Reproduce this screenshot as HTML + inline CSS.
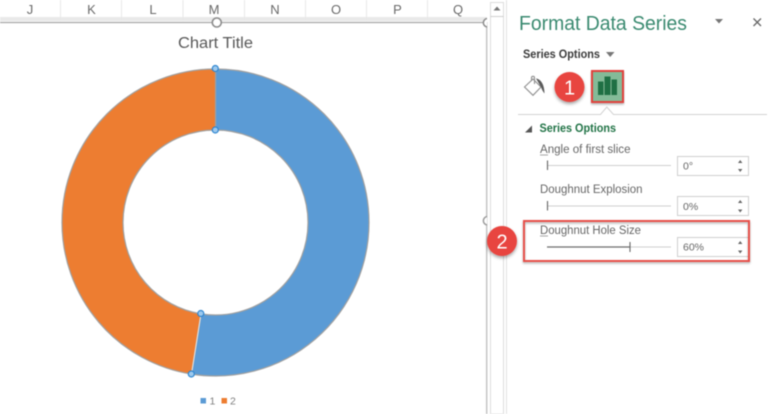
<!DOCTYPE html>
<html><head><meta charset="utf-8"><style>
html,body{margin:0;padding:0;background:#fff;width:768px;height:414px;overflow:hidden}
svg{display:block;filter:blur(.4px)}
text{font-family:"Liberation Sans",sans-serif}
</style></head><body>
<svg width="768" height="414" viewBox="0 0 768 414" xmlns="http://www.w3.org/2000/svg">
<defs>
<filter id="sh" x="-30%" y="-30%" width="160%" height="170%"><feDropShadow dx="0" dy="2" stdDeviation="1.5" flood-color="#000" flood-opacity=".35"/></filter>
<filter id="sh2" x="-5%" y="-10%" width="110%" height="125%"><feDropShadow dx="0" dy="1.5" stdDeviation="1" flood-color="#000" flood-opacity=".3"/></filter>
</defs>
<rect width="768" height="414" fill="#fff"/>
<!-- header -->
<rect x="0" y="17" width="487" height="4" fill="#e9e9e9"/>
<g stroke="#e8e8e8" stroke-width="1">
<path d="M60.500 0V21M121.500 0V21M183 0V21M244.500 0V21M305.500 0V21M366.500 0V21M427.500 0V21"/>
</g>
<g font-size="13" fill="#6a6a6a" text-anchor="middle">
<text x="30" y="14">J</text><text x="91.500" y="14">K</text><text x="153" y="14">L</text><text x="214" y="14">M</text>
<text x="275" y="14">N</text><text x="336" y="14">O</text><text x="397.500" y="14">P</text><text x="458" y="14">Q</text>
</g>
<!-- chart border -->
<path d="M0 22.500H486.500" fill="none" stroke="#a6a6a6" stroke-width="1.200"/>
<path d="M486.700 22V414" stroke="#c4c4c4" stroke-width="1.500"/>
<circle cx="216.800" cy="22.500" r="4.500" fill="#fff" stroke="#8c8c8c" stroke-width="1.600"/>
<path d="M487 18.500a4.300 4.300 0 0 0 0 8.500" fill="#fff" stroke="#8c8c8c" stroke-width="1.500"/>
<path d="M487 216.500a4.300 4.300 0 0 0 0 8.500" fill="#fff" stroke="#9c9c9c" stroke-width="1.500"/>
<!-- scrollbar -->
<rect x="490.500" y="2.500" width="13" height="411.500" fill="#fff" stroke="#dcdcdc"/>
<path d="M490.500 16.500H503.500" stroke="#d0d0d0"/>
<path d="M493.500 10.500L497 6.500L500.500 10.500Z" fill="#777"/>
<path d="M506.500 0V414" stroke="#e2e2e2"/>
<!-- title -->
<text x="215.500" y="48" font-size="15.500" fill="#595959" text-anchor="middle" textLength="75" lengthAdjust="spacingAndGlyphs">Chart Title</text>
<!-- donut -->
<path d="M215.500 69A153.500 153.500 0 0 1 369 222.500A153.500 153.500 0 0 1 191.500 374.100L201 313.860A92.500 92.500 0 0 0 308 222.500A92.500 92.500 0 0 0 215.500 130Z" fill="#5b9bd5" stroke="#a0a0a0" stroke-width="1.200"/>
<path d="M215.500 69A153.500 153.500 0 0 0 62 222.500A153.500 153.500 0 0 0 191.500 374.100L201 313.860A92.500 92.500 0 0 1 123 222.500A92.500 92.500 0 0 1 215.500 130Z" fill="#ed7d31" stroke="#a0a0a0" stroke-width="1.200"/>
<path d="M191.500 374.100L201 313.860" stroke="#e8e8e8" stroke-width="1"/>
<g fill="#9dc9ee" stroke="#2e86d0" stroke-width="1.200">
<circle cx="215.300" cy="68.500" r="3"/><circle cx="215.300" cy="130" r="3"/>
<circle cx="200.800" cy="313.500" r="3"/><circle cx="191.300" cy="374" r="3"/>
</g>
<!-- legend -->
<rect x="200.500" y="398" width="5.500" height="5.500" fill="#5b9bd5"/>
<text x="209.500" y="404.500" font-size="10.500" fill="#7f7f7f">1</text>
<rect x="221.500" y="398" width="5.500" height="5.500" fill="#ed7d31"/>
<text x="230" y="404.500" font-size="10.500" fill="#7f7f7f">2</text>
<!-- panel title -->
<text x="519" y="30" font-size="20.500" fill="#3a8a70" textLength="168" lengthAdjust="spacingAndGlyphs">Format Data Series</text>
<path d="M715 19H723L719 23.500Z" fill="#777"/>
<path d="M753.500 18.500L761 26M761 18.500L753.500 26" stroke="#666" stroke-width="1.300" fill="none"/>
<text x="523" y="58" font-size="11.500" font-weight="bold" fill="#3a3a3a" textLength="77" lengthAdjust="spacingAndGlyphs">Series Options</text>
<path d="M606 52H614.500L610.200 57Z" fill="#777"/>
<!-- paint bucket -->
<g fill="none" stroke="#8f8f8f" stroke-width="1.100">
<path d="M524.500 87L533 79L541 87L533 95.300Z" fill="#fff"/>
<path d="M531.500 81V77.800a1.400 1.400 0 0 1 3 0V84"/>
</g>
<path d="M536 78.500C541 79 544.500 85 544.500 93.500C543 91.500 542 90 541 87Z" fill="#5a5a5a"/>
<!-- step 1 -->
<circle cx="569.500" cy="87" r="15" fill="#e8453f" filter="url(#sh)"/>
<text x="569.500" y="94.500" font-size="20" fill="#fff" text-anchor="middle">1</text>
<!-- chart icon -->
<rect x="592" y="71" width="31" height="31" fill="#84bb98" stroke="#e2423c" stroke-width="2" filter="url(#sh2)"/>
<g fill="#1f7044">
<rect x="598" y="81.500" width="5.500" height="13.500"/><rect x="604.500" y="76.500" width="6" height="18.500"/><rect x="611.500" y="79.500" width="5.500" height="15.500"/>
</g>
<!-- divider -->
<path d="M518 114.500H600.500L606.800 107L613.500 114.500H767" fill="none" stroke="#d2d2d2"/>
<!-- section head -->
<path d="M525 132.500H532V125.500Z" fill="#555"/>
<text x="539.500" y="132" font-size="11.500" font-weight="bold" fill="#217346" textLength="76.500" lengthAdjust="spacingAndGlyphs">Series Options</text>
<!-- rows -->
<g font-size="11.500" fill="#666">
<text x="540" y="153" textLength="90.500" lengthAdjust="spacingAndGlyphs">Angle of first slice</text>
<text x="540" y="193" textLength="102.500" lengthAdjust="spacingAndGlyphs">Doughnut Explosion</text>
<text x="540" y="234" textLength="101" lengthAdjust="spacingAndGlyphs">Doughnut Hole Size</text>
</g>
<path d="M540 155H548M540 236H548" stroke="#888" stroke-width=".8"/>
<!-- sliders -->
<path d="M548 165.500H671M548 206H671M630 247H671" stroke="#cfcfcf"/>
<path d="M547.500 160.500V170M547.500 201V210.500M630 242V252" stroke="#666" stroke-width="1.100"/>
<path d="M547 247H630" stroke="#6e6e6e" stroke-width="1.300"/>
<!-- spinners -->
<g fill="#fff" stroke="#cfcfcf">
<rect x="677.500" y="156.500" width="71" height="19"/>
<rect x="677.500" y="196.500" width="71" height="19"/>
<rect x="677.500" y="237.500" width="71" height="19"/>
</g>
<g font-size="10.500" fill="#666">
<text x="683" y="169.500">0°</text><text x="683" y="210">0%</text><text x="683" y="250.500">60%</text>
</g>
<g fill="#666">
<path d="M738 163L740.200 160L742.400 163ZM738 169H742.400L740.200 172Z"/>
<path d="M738 203L740.200 200L742.400 203ZM738 209.500H742.400L740.200 212.500Z"/>
<path d="M738 244L740.200 241L742.400 244ZM738 250.500H742.400L740.200 253.500Z"/>
</g>
<!-- highlight -->
<rect x="524" y="221" width="225" height="40" fill="none" stroke="#e8504a" stroke-width="2" filter="url(#sh2)"/>
<!-- step 2 -->
<circle cx="502" cy="241" r="15" fill="#e8453f" filter="url(#sh)"/>
<text x="502" y="248.500" font-size="20" fill="#fff" text-anchor="middle">2</text>
</svg>
</body></html>
